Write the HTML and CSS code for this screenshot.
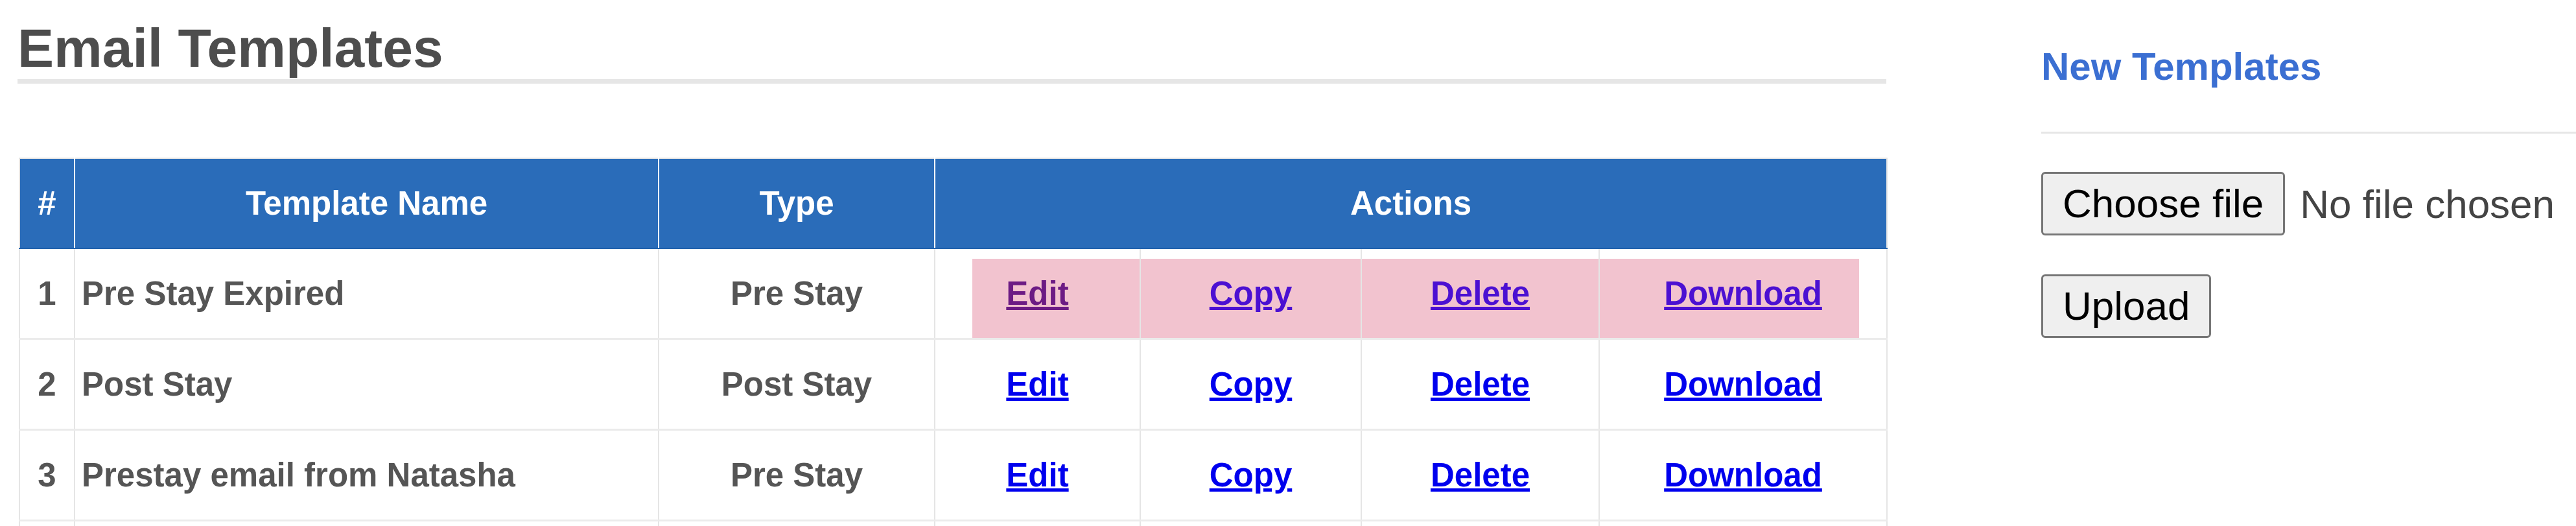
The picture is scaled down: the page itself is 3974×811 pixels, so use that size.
FILE: index.html
```html
<!DOCTYPE html>
<html lang="en">

<head>
    <meta charset="UTF-8">
    <meta name="viewport" content="width=device-width, initial-scale=1.0">
    <title>Email Templates</title>
    <link rel="stylesheet" href="styles.css">
</head>

<body>
    <div class="page">
        <div class="main">
            <h1 class="title">Email Templates</h1>
            <table class="templates">
                <colgroup>
                    <col class="c-num">
                    <col class="c-name">
                    <col class="c-type">
                    <col class="c-edit">
                    <col class="c-copy">
                    <col class="c-delete">
                    <col class="c-download">
                </colgroup>
                <thead>
                    <tr>
                        <th>#</th>
                        <th>Template Name</th>
                        <th>Type</th>
                        <th colspan="4">Actions</th>
                    </tr>
                </thead>
                <tbody>
                    <tr class="active">
                        <td class="num">1</td>
                        <td class="name">Pre Stay Expired</td>
                        <td class="type">Pre Stay</td>
                        <td class="act hl hl-first"><a href="#" class="visited">Edit</a></td>
                        <td class="act hl"><a href="#">Copy</a></td>
                        <td class="act hl"><a href="#">Delete</a></td>
                        <td class="act hl hl-last"><a href="#">Download</a></td>
                    </tr>
                    <tr>
                        <td class="num">2</td>
                        <td class="name">Post Stay</td>
                        <td class="type">Post Stay</td>
                        <td class="act"><a href="#">Edit</a></td>
                        <td class="act"><a href="#">Copy</a></td>
                        <td class="act"><a href="#">Delete</a></td>
                        <td class="act"><a href="#">Download</a></td>
                    </tr>
                    <tr>
                        <td class="num">3</td>
                        <td class="name">Prestay email from Natasha</td>
                        <td class="type">Pre Stay</td>
                        <td class="act"><a href="#">Edit</a></td>
                        <td class="act"><a href="#">Copy</a></td>
                        <td class="act"><a href="#">Delete</a></td>
                        <td class="act"><a href="#">Download</a></td>
                    </tr>
                    <tr>
                        <td class="num">&nbsp;</td>
                        <td class="name"></td>
                        <td class="type"></td>
                        <td class="act"></td>
                        <td class="act"></td>
                        <td class="act"></td>
                        <td class="act"></td>
                    </tr>
                </tbody>
            </table>
        </div>

        <div class="side">
            <h2 class="side-title">New Templates</h2>
            <div class="upload-form">
                <div class="file-row">
                    <label class="btn file-btn">Choose file<input type="file" class="file-input"></label>
                    <span class="file-name">No file chosen</span>
                </div>
                <button class="btn" type="button">Upload</button>
            </div>
        </div>
    </div>
</body>

</html>
```

FILE: styles.css
```css
html,
body {
    overflow: hidden;
}

body {
    margin: 0;
    font-family: "Liberation Sans", Arial, sans-serif;
    background-color: #fff;
}

.page {
    display: flex;
    padding: 26px 0 0 27px;
}

.main {
    width: 2883px;
    flex-shrink: 0;
}

.title {
    margin: 0;
    font-size: 84px;
    line-height: 96px;
    font-weight: bold;
    color: #4d4d4d;
    border-bottom: 7px solid #e6e6e6;
}

.templates {
    margin: 114px 0 0 2px;
    width: 2881px;
    table-layout: fixed;
    border-collapse: collapse;
    border: 2px solid #e4e4e4;
    font-size: 51px;
    font-weight: bold;
    color: #555;
}

.c-num { width: 85px; }
.c-name { width: 901px; }
.c-type { width: 426px; }
.c-edit { width: 317px; }
.c-copy { width: 341px; }
.c-delete { width: 367px; }
.c-download { width: 444px; }

.templates th {
    height: 137px;
    padding: 0 10px;
    background-color: #2a6cb9;
    color: #fff;
    border-right: 2px solid #fff;
    border-bottom: 2px solid #2262ad;
    text-align: center;
}

.templates th:last-child {
    border-right: 2px solid #e4e4e4;
}

.templates td {
    height: 137px;
    padding: 0 10px;
    border-left: 2px solid rgba(0, 0, 0, 0.1);
    border-right: 2px solid rgba(0, 0, 0, 0.1);
    border-bottom: 3px solid #ebebeb;
    vertical-align: middle;
}

.templates .num,
.templates .type,
.templates .act {
    text-align: center;
}

.templates .name {
    text-align: left;
}

.act a {
    color: #0000ee;
}

.hl {
    background-image: linear-gradient(#f2c3cf, #f2c3cf);
    background-repeat: no-repeat;
    background-position: left bottom;
    background-size: 100% calc(100% - 15px);
}

.hl-first {
    background-position: right bottom;
    background-size: calc(100% - 57px) calc(100% - 15px);
}

.hl-last {
    background-size: calc(100% - 42px) calc(100% - 15px);
}

.active .act a {
    color: #4b10d2;
}

.active .act a.visited {
    color: #6c1b84;
}

.side {
    flex: 1;
    margin-left: 239px;
}

.side-title {
    margin: 42px 0 0;
    padding-bottom: 66px;
    font-size: 60px;
    line-height: 69px;
    font-weight: bold;
    color: #3b6fd2;
    border-bottom: 3px solid #e6e6e6;
}

.upload-form {
    padding-top: 59px;
}

.file-row {
    display: flex;
    align-items: center;
    gap: 23px;
    margin-bottom: 60px;
}

.btn {
    display: inline-block;
    padding: 10px 30px;
    font-family: "Liberation Sans", Arial, sans-serif;
    font-size: 62px;
    line-height: 72px;
    color: #000;
    background-color: #efefef;
    border: 3px solid #767676;
    border-radius: 6px;
    cursor: pointer;
}

.file-input {
    display: none;
}

.file-name {
    font-size: 62px;
    color: #444;
}
```
